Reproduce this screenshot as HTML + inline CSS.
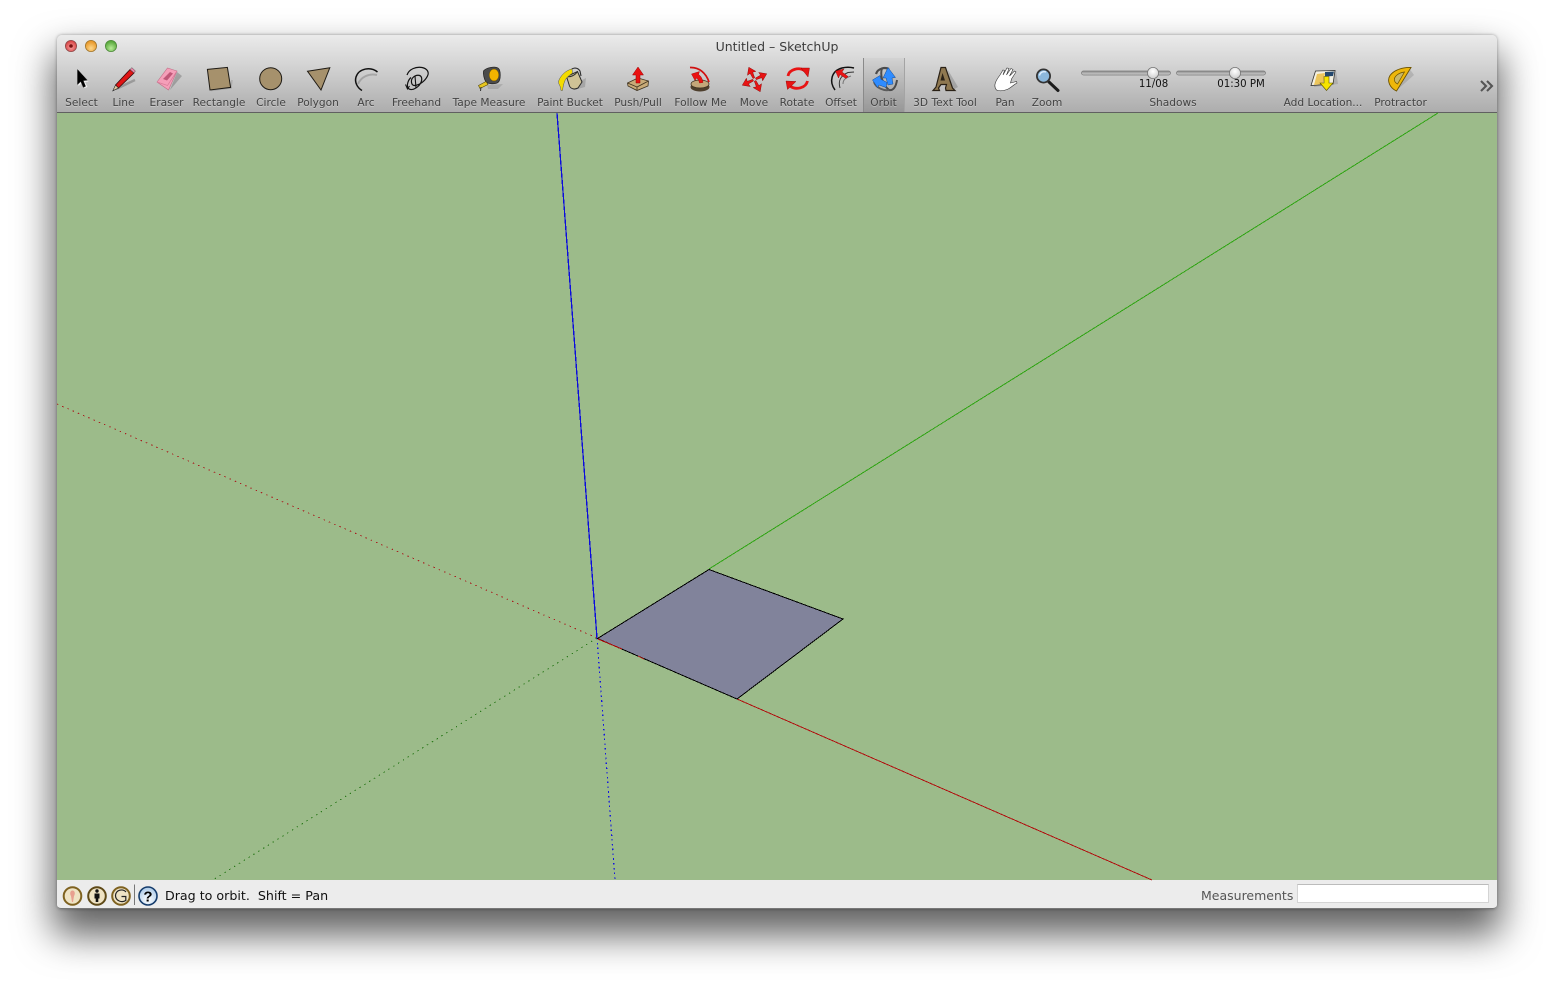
<!DOCTYPE html>
<html><head><meta charset="utf-8"><title>Untitled - SketchUp</title>
<style>
html,body{margin:0;padding:0;background:#fff;width:1554px;height:988px;overflow:hidden}
#win{position:absolute;left:57px;top:35px;width:1440px;height:874px;border-radius:5px 5px 4px 4px;box-shadow:0 22px 38px 4px rgba(0,0,0,.62),0 0 3px rgba(0,0,0,.35);background:#ececec}
#tb{position:absolute;left:57px;top:35px;width:1440px;height:77px;border-radius:5px 5px 0 0;background:linear-gradient(#ebebeb,#d6d6d6 35%,#adadad);border-bottom:1px solid #606060}
#sb{position:absolute;left:57px;top:880px;width:1440px;height:29px;background:#ececec;border-radius:0 0 4px 4px;border-bottom:1px solid #777;box-sizing:border-box}
#or{position:absolute;left:863px;top:58px;width:42px;height:54px;background:linear-gradient(rgba(0,0,0,.03),rgba(0,0,0,.13));border-left:1px solid #8a8a8a;border-right:1px solid #a4a4a4;box-sizing:border-box}
svg{position:absolute;left:0;top:0}
.l,.t,.s{position:absolute;font-family:"DejaVu Sans","Liberation Sans",sans-serif;white-space:nowrap}
.l{font-size:10.6px;line-height:12px;top:96.5px;color:#444;transform:translateX(-50%);text-shadow:0 1px 0 rgba(255,255,255,.3)}
.t{font-size:10.2px;line-height:12px;top:79px;color:#111;transform:translateX(-50%)}
#title{position:absolute;left:57px;width:1440px;top:39.5px;text-align:center;font:12.5px/14px "DejaVu Sans","Liberation Sans",sans-serif;color:#3c3c3c}
.s{font-size:12.65px;line-height:15px;top:888px;color:#111}
#inp{position:absolute;left:1297px;top:884px;width:192px;height:19px;background:#fff;border:1px solid #d4d4d4;border-top-color:#bcbcbc;box-sizing:border-box}
</style></head><body>
<div id="win"></div>
<div id="tb"></div>
<div id="or"></div>
<div id="sb"></div>
<div id="inp"></div>
<div id="title">Untitled – SketchUp</div>
<svg width="1554" height="988" viewBox="0 0 1554 988" xmlns="http://www.w3.org/2000/svg">
<defs>
<radialGradient id="r1" cx=".5" cy=".6" r=".6"><stop offset="0" stop-color="#f8a0a0"/><stop offset="1" stop-color="#d43a3a"/></radialGradient>
<radialGradient id="r2" cx=".5" cy=".7" r=".6"><stop offset="0" stop-color="#fdd78a"/><stop offset="1" stop-color="#e8982a"/></radialGradient>
<radialGradient id="r3" cx=".5" cy=".7" r=".6"><stop offset="0" stop-color="#b8ec98"/><stop offset="1" stop-color="#58a83c"/></radialGradient>
<radialGradient id="k" cx=".5" cy=".35" r=".7"><stop offset="0" stop-color="#fff"/><stop offset="1" stop-color="#c9c9c9"/></radialGradient>
<linearGradient id="sl" x1="0" y1="0" x2="0" y2="1"><stop offset="0" stop-color="#8a8a8a"/><stop offset="1" stop-color="#d4d4d4"/></linearGradient>
<radialGradient id="help" cx=".5" cy=".7" r=".7"><stop offset="0" stop-color="#fff"/><stop offset="1" stop-color="#a8c8e8"/></radialGradient>
<path id="mv" d="M0 -13.5L4.6 -6.8L1.4 -7.4L0.9 -1.5L-0.9 -1.5L-1.4 -7.4L-4.6 -6.8Z" fill="#e81414" stroke="#8a0000" stroke-width=".4"/>
</defs>
<!-- canvas -->
<rect x="57" y="113" width="1440" height="767" fill="#9cbb8a"/>
<g fill="none" shape-rendering="crispEdges">
<path d="M597 638L57 404" stroke="#a82020" stroke-width="1" stroke-dasharray="1.5 4.2"/>
<path d="M597 638L213 880" stroke="#2c7a1c" stroke-width="1" stroke-dasharray="1.5 4.2"/>
<path d="M597 638L615 880" stroke="#1212e0" stroke-width="1.2" stroke-dasharray="1.6 3.2"/>
<path d="M557 113L597 638" stroke="#0c0cdc" stroke-width="1.3"/>
<path d="M709 569L1438 113" stroke="#30a414" stroke-width="1"/>
<path d="M737 699L1152 880" stroke="#b01010" stroke-width="1"/>
</g>
<path d="M597.5 638.5L709 569.5L843 619L737 699Z" fill="#81839b" stroke="#000" stroke-width="1" shape-rendering="crispEdges"/>
<path d="M598 639L622 649M638 656L644 659" stroke="#a80a0a" stroke-width="1.1" fill="none" shape-rendering="crispEdges"/>
<!-- traffic lights -->
<circle cx="71" cy="46" r="5.6" fill="url(#r1)" stroke="#8f4a4a" stroke-width=".8"/><circle cx="71" cy="46" r="1.8" fill="#7a1010"/>
<circle cx="91" cy="46" r="5.6" fill="url(#r2)" stroke="#a0762e" stroke-width=".8"/>
<circle cx="111" cy="46" r="5.6" fill="url(#r3)" stroke="#4f8a3c" stroke-width=".8"/>
<!-- select -->
<path d="M78.5 71L78.5 86L82 83L84.5 88L87.5 87L85 82L88.5 81.5Z" fill="#fff" fill-opacity=".8"/>
<path d="M77.5 69.5L77.5 84.5L80.8 81.5L83.3 87.3L85.6 86.3L83.2 80.6L87.3 80.2Z" fill="#000" stroke="#222" stroke-width=".5"/>
<!-- line -->
<path d="M116 89L135 80" stroke="#000" stroke-opacity=".22" stroke-width="2.5"/>
<path d="M115.5 85L130 69.5L134 73L118.5 88Z" fill="#e01515" stroke="#3a0a0a" stroke-width=".8"/>
<path d="M130 69.5L131.8 67.6L135.4 71L134 73Z" fill="#e888a8" stroke="#444" stroke-width=".5"/>
<path d="M115.5 85L112.8 90.8L118.5 88Z" fill="#e3c9a0" stroke="#222" stroke-width=".6"/>
<!-- eraser -->
<path d="M170 90L182 76L177 72Z" fill="#000" fill-opacity=".2"/>
<path d="M157 82L167.5 68L177 71L168.5 90Z" fill="#f59fb9" stroke="#c07088" stroke-width=".6"/>
<path d="M157 82L167.5 85.5L177 71" fill="none" stroke="#d87a98" stroke-width=".7"/>
<path d="M163 79L170 72L173 73.5L167 80.5Z" fill="#c05878"/>
<!-- rectangle -->
<path d="M207.4 69.4L227.4 67.4L230.6 87.4L210 90Z" fill="#a6916c" stroke="#1e1a14" stroke-width="1"/>
<path d="M211 90.5L231 88L232 80" stroke="#000" stroke-opacity=".12" fill="none" stroke-width="1.5"/>
<!-- circle -->
<circle cx="270.7" cy="78.7" r="11" fill="#a6916c" stroke="#1e1a14" stroke-width="1"/>
<!-- polygon -->
<path d="M307.5 71.3L329.8 67.8L321 90Z" fill="#a6916c" stroke="#1e1a14" stroke-width="1"/>
<!-- arc -->
<path d="M377 75C369 73 361 77 358 84" fill="none" stroke="#000" stroke-opacity=".18" stroke-width="2"/>
<path d="M377.5 72C371 66.5 359 68 356 77C354.5 82 357 87.5 362 90.5" fill="none" stroke="#111" stroke-width="1.5"/>
<!-- freehand -->
<path d="M407 75C409 69 416 66.5 422 67.5C427 68.5 429.5 72 427.5 76C425 81 420 85 414.5 85.5C411 85.5 410.5 80 413 77.5C416 74.5 420.5 74.5 421.5 77.5C422.5 81 420 86 415 88.5C412.5 90 409.5 90 408 88C406.5 85.5 408 80 411 77.5" fill="none" stroke="#111" stroke-width="1.2"/>
<path d="M415 76L416 88" fill="none" stroke="#111" stroke-width="1.1"/>
<path d="M405.5 84.5L407.5 89L409.5 86" fill="none" stroke="#111" stroke-width="1"/>
<!-- tape measure -->
<path d="M487 85L503 84L498 89L488 89Z" fill="#000" fill-opacity=".12"/>
<path d="M483.5 71C486 67.5 495 66 498 68C501 70 501 80 498 82.5C495 84.5 488 84 486 82C484 79 483 74 483.5 71Z" fill="#4b4b4b" stroke="#222" stroke-width=".7"/>
<ellipse cx="494" cy="75" rx="4.8" ry="6" fill="#f2b400" stroke="#6a5000" stroke-width=".5"/>
<path d="M486 81.5L478.5 85.5L480 88.5L488 84.5Z" fill="#e8c720" stroke="#55480a" stroke-width=".6"/>
<path d="M480.5 91L481 87" stroke="#333" stroke-width="1"/>
<!-- paint bucket -->
<path d="M570 86L586 78L585 87L574 90Z" fill="#000" fill-opacity=".15"/>
<path d="M566.5 76.5L577.5 71.5L582 82L578 88C574 90 570.5 88.5 569.5 86Z" fill="#cfc296" stroke="#2b2b2b" stroke-width="1"/>
<path d="M566.5 76.5C570 77.5 575 75.5 577.5 71.5" fill="none" stroke="#2b2b2b" stroke-width="1"/>
<path d="M570 72C571 67.5 577 66.5 580 71L581 76" fill="none" stroke="#2b2b2b" stroke-width="1.1"/>
<path d="M572 69C566 70 560 76 558.5 81.5C558.5 85 560.5 85 561 90.5L562.5 90.5C563 87 563.5 84 565 80.5C566.5 77 570 75 572.5 73Z" fill="#f4dc00" stroke="#555" stroke-width=".5"/>
<!-- push pull -->
<path d="M627.5 83L638 78L648.5 81L648 86L637 90.5L628 86Z" fill="#c9ab78" stroke="#40331f" stroke-width=".8"/>
<path d="M627.5 83L637 87L648.5 81M637 87L637 90.5" fill="none" stroke="#40331f" stroke-width=".8"/>
<path d="M638 67L643.5 75L640 75L640 83L636 83L636 75L632.5 75Z" fill="#ea1111" stroke="#900" stroke-width=".5"/>
<!-- follow me -->
<ellipse cx="700" cy="87" rx="9.5" ry="4.5" fill="#4e3f2d"/>
<ellipse cx="700" cy="84" rx="9" ry="4" fill="#c4a77a" stroke="#3a2e1e" stroke-width=".7"/>
<path d="M690 67.5C699 67 706 73 709 82" fill="none" stroke="#d01010" stroke-width="1.7"/>
<path d="M691.5 74L699.5 71.5L698.5 74.5C701 76 702.5 79 703 82.5L699.5 83C699 80.5 698 79 696.5 78L695 80.5Z" fill="#ea1111" stroke="#900" stroke-width=".4"/>
<!-- move -->
<g transform="translate(754.5 79.5)">
<use href="#mv" transform="rotate(-25)"/><use href="#mv" transform="rotate(65)"/><use href="#mv" transform="rotate(155)"/><use href="#mv" transform="rotate(245)"/>
</g>
<!-- rotate -->
<path d="M788 76C789 69.5 799 66.5 805 71" fill="none" stroke="#e81414" stroke-width="2.8"/>
<path d="M801 68L809.5 68L808 77Z" fill="#e81414" stroke="#8a0000" stroke-width=".4"/>
<path d="M807.5 81C806 88 796 90.5 790 86" fill="none" stroke="#e81414" stroke-width="2.8"/>
<path d="M786 81L796 81.5L787.5 89.5Z" fill="#e81414" stroke="#8a0000" stroke-width=".4"/>
<!-- offset -->
<path d="M835 90C829 82 831 71 842 68C846 67 850 67 854 68" fill="none" stroke="#111" stroke-width="1.5"/>
<path d="M840 88C838 81 840 76 848 72.5L854 72" fill="none" stroke="#333" stroke-width="1"/>
<path d="M843 84C843 80 845 78 851 76" fill="none" stroke="#777" stroke-width="1"/>
<path d="M835.5 71L844 69L842 72L848 76.5L846 78.5L840 74.5L838.5 78Z" fill="#e81414" stroke="#8a0000" stroke-width=".4"/>
<!-- orbit -->
<path d="M876 74C878 68 885 67 889 69" fill="none" stroke="#4c4c4c" stroke-width="2.2"/>
<path d="M882 68C880 75 882 84 889 90C893 91 896 87 897 80" fill="none" stroke="#4c4c4c" stroke-width="2"/>
<path d="M874 82C876 88 884 91 889 90" fill="none" stroke="#5c5c5c" stroke-width="2"/>
<path d="M888 67.5L895.5 77.5L892 78L893 84L888 85L886 78L883 78Z" fill="#2f8cff" stroke="#164a90" stroke-width=".5"/>
<path d="M872.5 80L880 75.5L880.5 79L887 82.5L886 87.5L879 85L877.5 87.5Z" fill="#2f8cff" stroke="#164a90" stroke-width=".5"/>
<!-- 3D text -->
<path d="M948 70L958 87L951 91Z" fill="#000" fill-opacity=".16"/>
<path d="M941 67.5L945.5 67.5L952.5 88L955 90.5L946 90.5L945.5 88L946.5 84.5L941 84.5L938.5 88L939.5 90.5L933 90.5L936 87Z" fill="#8f7850" stroke="#2a2116" stroke-width="1.2"/>
<path d="M942.5 73L945 80.5L940.5 80.5Z" fill="#2a2116"/>
<!-- pan -->
<path d="M996.5 90C993 86 995.5 81 1000 75L1003 70L1004.5 70.5L1003 75L1007 68L1009 68.5L1006.5 75L1011 68.5L1013 69.5L1009.5 76L1014.5 71L1016 72L1011.5 79L1010.5 83L1016.5 81.5L1017 83C1013 85 1011 88 1007 89.5C1003 91 999 91 996.5 90Z" fill="#fff" stroke="#333" stroke-width=".6"/>
<!-- zoom -->
<path d="M1049 82L1058 90.5" stroke="#1c1c1c" stroke-width="3" stroke-linecap="round"/>
<circle cx="1043.5" cy="76" r="6.6" fill="#8cb8dc" stroke="#333" stroke-width="1.8"/>
<path d="M1039.5 75.5C1040 72.5 1043 71 1046 72" stroke="#e0f0ff" stroke-width="1.3" fill="none"/>
<!-- sliders -->
<rect x="1081.5" y="71" width="89" height="4" rx="2" fill="url(#sl)" stroke="#777" stroke-width=".7"/>
<rect x="1176.5" y="71" width="89" height="4" rx="2" fill="url(#sl)" stroke="#777" stroke-width=".7"/>
<circle cx="1153" cy="73" r="5.6" fill="url(#k)" stroke="#777" stroke-width=".8"/>
<circle cx="1235" cy="73" r="5.6" fill="url(#k)" stroke="#777" stroke-width=".8"/>
<!-- add location -->
<path d="M1316 71L1336 70L1338 84L1314 87Z" fill="#000" fill-opacity=".12"/>
<path d="M1315.5 71L1335 70.5L1333 84L1311 85.5Z" fill="#f4f0e0" stroke="#333" stroke-width=".8"/>
<path d="M1317 74L1325 73L1323 84L1314 85Z" fill="#ecc55c"/>
<path d="M1325 72L1334 71.5L1333 76L1325 76.5Z" fill="#24486e"/>
<path d="M1324 76.5L1329 76.5L1329 83L1333 83L1326.5 90.5L1320 83L1324 83Z" fill="#f6e400" stroke="#5c5400" stroke-width=".6"/>
<!-- protractor -->
<path d="M1396 91L1414 75L1409 68Z" fill="#000" fill-opacity=".12"/>
<path d="M1411 67.5L1396.5 91C1390 88 1386.5 81 1390 75.5C1394 70 1403 67 1411 67.5Z" fill="#eeb70a" stroke="#6c5200" stroke-width=".9"/>
<path d="M1404.5 72L1397.5 84C1394 82 1393.5 79 1395.5 76.5C1397.5 74 1401 72.5 1404.5 72Z" fill="#c8b86a" stroke="#6c5200" stroke-width=".7"/>
<!-- overflow -->
<path d="M1481 81L1486 86L1481 91M1487 81L1492 86L1487 91" fill="none" stroke="#555" stroke-width="2.1"/>
<!-- status icons -->
<circle cx="72.5" cy="896" r="8.8" fill="#efe3c4" stroke="#7f6220" stroke-width="2"/>
<path d="M72.5 890.5C70 890.5 69.6 894 71 896L72 902L73 902L74 896C75.4 894 75 890.5 72.5 890.5Z" fill="#e8a090"/>
<circle cx="97" cy="896" r="8.8" fill="#efe3c4" stroke="#5f4a18" stroke-width="2"/>
<circle cx="97" cy="891" r="1.7" fill="#111"/><path d="M94.5 893.5H99.5V898.5H98.3V902H95.7V898.5H94.5Z" fill="#111"/>
<circle cx="121" cy="896" r="8.8" fill="#efe3c4" stroke="#7f6220" stroke-width="2"/>
<path d="M126 892C123 888.5 116 889.5 115.5 895.5C115.5 901 122 903 125.8 900.5V896.5H121.5" fill="none" stroke="#222" stroke-width="1.2"/>
<path d="M134.5 884.5V905" stroke="#777" stroke-width="1"/>
<circle cx="148" cy="896" r="9" fill="url(#help)" stroke="#153c6c" stroke-width="1.6"/>
<text x="148" y="901.5" text-anchor="middle" font-family="Liberation Sans,sans-serif" font-weight="700" font-size="15" fill="#000">?</text>
</svg>
<span class="l" style="left:81.5px">Select</span>
<span class="l" style="left:123.5px">Line</span>
<span class="l" style="left:166.5px">Eraser</span>
<span class="l" style="left:219px">Rectangle</span>
<span class="l" style="left:271px">Circle</span>
<span class="l" style="left:318px">Polygon</span>
<span class="l" style="left:366px">Arc</span>
<span class="l" style="left:416.5px">Freehand</span>
<span class="l" style="left:489px">Tape Measure</span>
<span class="l" style="left:570px">Paint Bucket</span>
<span class="l" style="left:638px">Push/Pull</span>
<span class="l" style="left:700.5px">Follow Me</span>
<span class="l" style="left:754px">Move</span>
<span class="l" style="left:797px">Rotate</span>
<span class="l" style="left:841px">Offset</span>
<span class="l" style="left:883.5px">Orbit</span>
<span class="l" style="left:945px">3D Text Tool</span>
<span class="l" style="left:1005px">Pan</span>
<span class="l" style="left:1047px">Zoom</span>
<span class="l" style="left:1173px">Shadows</span>
<span class="l" style="left:1323px">Add Location...</span>
<span class="l" style="left:1400.5px">Protractor</span>
<span class="t" style="left:1153.5px">11/08</span>
<span class="t" style="left:1241px">01:30 PM</span>
<span class="s" style="left:165px;white-space:pre">Drag to orbit.  Shift = Pan</span>
<span class="s" style="left:1201px;color:#555;font-size:12.5px">Measurements</span>
</body></html>
